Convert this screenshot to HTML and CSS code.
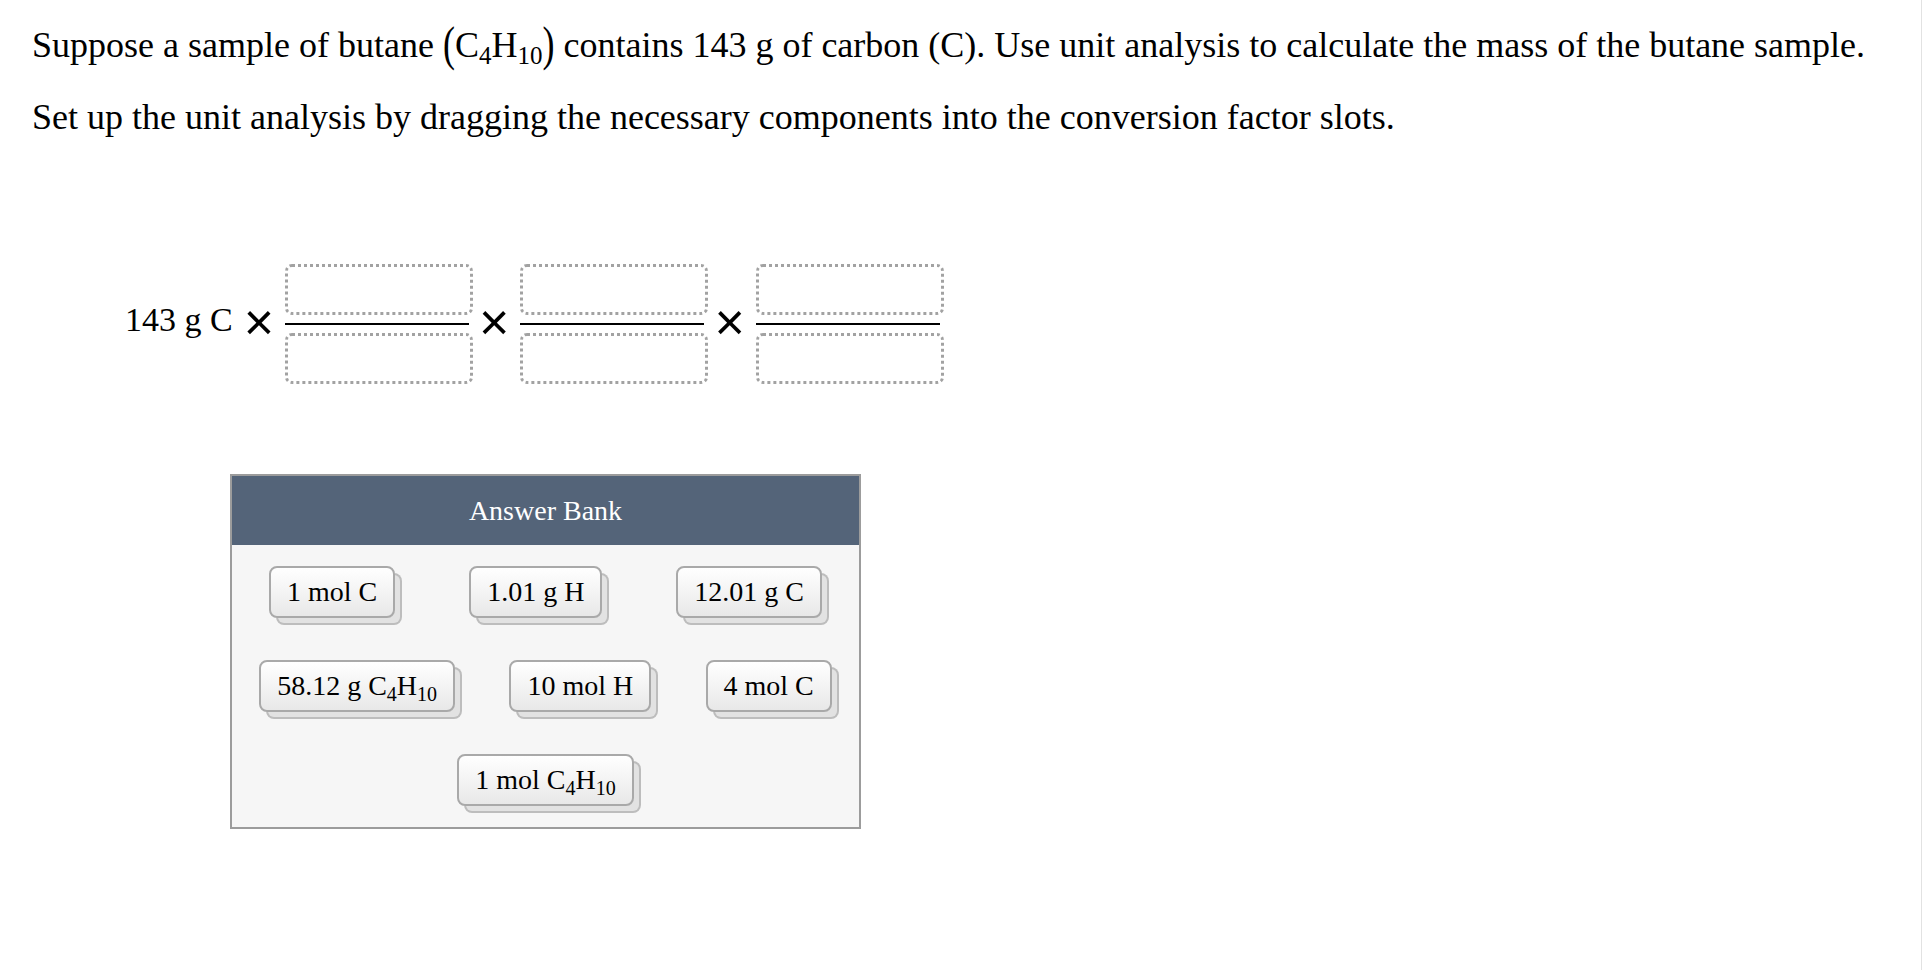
FILE: index.html
```html
<!DOCTYPE html>
<html>
<head>
<meta charset="utf-8">
<title>Unit analysis</title>
<link rel="stylesheet" href="styles.css">
</head>
<body>
<div class="page">
  <p class="prompt">Suppose a sample of butane <span class="paren">(</span>C<sub>4</sub>H<sub>10</sub><span class="paren">)</span> contains 143 g of carbon (C). Use unit analysis to calculate the mass of the butane sample.</p>
  <p class="prompt second">Set up the unit analysis by dragging the necessary components into the conversion factor slots.</p>

  <div class="equation">
    <span class="given">143 g C</span>
    <span class="times">×</span>
    <div class="fraction">
      <div class="slot top"></div>
      <div class="bar"></div>
      <div class="slot bottom"></div>
    </div>
    <span class="times">×</span>
    <div class="fraction">
      <div class="slot top"></div>
      <div class="bar"></div>
      <div class="slot bottom"></div>
    </div>
    <span class="times">×</span>
    <div class="fraction">
      <div class="slot top"></div>
      <div class="bar"></div>
      <div class="slot bottom"></div>
    </div>
  </div>

  <div class="bank">
    <div class="bank-head">Answer Bank</div>
    <div class="bank-body">
      <div class="bank-row">
        <span class="chip">1 mol C</span>
        <span class="chip">1.01 g H</span>
        <span class="chip">12.01 g C</span>
      </div>
      <div class="bank-row">
        <span class="chip">58.12 g C<sub>4</sub>H<sub>10</sub></span>
        <span class="chip">10 mol H</span>
        <span class="chip">4 mol C</span>
      </div>
      <div class="bank-row">
        <span class="chip">1 mol C<sub>4</sub>H<sub>10</sub></span>
      </div>
    </div>
  </div>
</div>
</body>
</html>
```

FILE: styles.css
```css
html, body {
  margin: 0;
  padding: 0;
  background: #ffffff;
}

.page {
  width: 1922px;
  min-height: 970px;
  box-sizing: border-box;
  border-right: 1px solid #e2e2e2;
  padding-top: 25px;
  font-family: "Liberation Serif", "Times New Roman", serif;
  color: #000;
}

.prompt {
  margin: 0;
  padding-left: 32px;
  font-size: 36px;
  line-height: 40px;
  white-space: nowrap;
}

.prompt.second {
  margin-top: 32px;
}

.prompt sub {
  font-size: 25px;
  line-height: 0;
  vertical-align: -7px;
}

.paren {
  display: inline-block;
  transform: scale(1, 1.35);
  transform-origin: 50% 60%;
}

.equation {
  display: flex;
  align-items: center;
  margin-top: 127px;
  padding-left: 125px;
}

.given {
  font-size: 34px;
  line-height: 40px;
  padding-bottom: 9px;
}

.times {
  font-family: "Liberation Sans", Arial, sans-serif;
  font-size: 52px;
  line-height: 40px;
  margin: 0 11px 0 6px;
  padding-bottom: 4px;
}

.given + .times {
  margin-left: 11px;
}

.fraction {
  display: flex;
  flex-direction: column;
  width: 188px;
}

.slot {
  box-sizing: border-box;
  height: 51px;
  border: 3px dotted #a2a2a2;
  border-radius: 7px;
}

.slot.top {
  margin-bottom: 8px;
}

.slot.bottom {
  margin-top: 8px;
}

.bar {
  height: 2px;
  background: #000;
  margin-right: 4px;
}

.bank {
  width: 631px;
  box-sizing: border-box;
  margin-top: 90px;
  margin-left: 230px;
  border: 2px solid #9c9c9c;
  background: #f6f6f6;
}

.bank-head {
  height: 69px;
  line-height: 69px;
  background: #546479;
  color: #ffffff;
  text-align: center;
  font-size: 28px;
}

.bank-body {
  display: flex;
  flex-direction: column;
  gap: 42px;
  padding: 21px 0 21px;
}

.bank-row {
  display: flex;
  justify-content: space-around;
}

.chip {
  box-sizing: border-box;
  height: 52px;
  padding: 8px 16px;
  border: 2px solid #a9a9a9;
  border-radius: 8px;
  background: linear-gradient(#ffffff, #e8e8e8);
  font-size: 28px;
  line-height: 32px;
  white-space: nowrap;
  box-shadow: 7px 7px 0 -2px #e2e2e2, 7px 7px 0 0 #bdbdbd;
}

.chip sub {
  font-size: 20px;
  line-height: 0;
  vertical-align: -6px;
}
```
